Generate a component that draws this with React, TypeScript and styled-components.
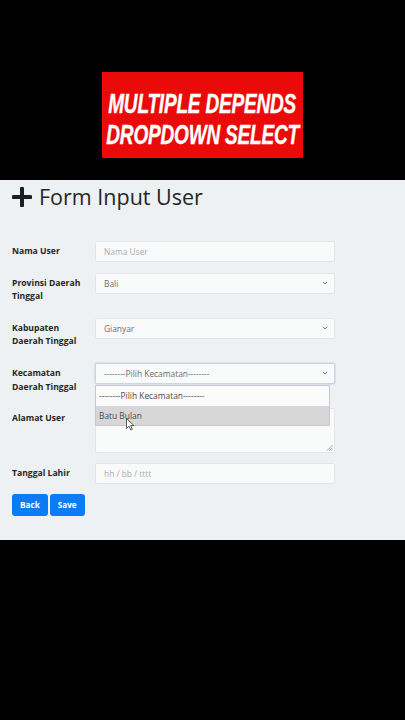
import styled, { createGlobalStyle } from 'styled-components'

const GlobalStyle = createGlobalStyle`
  html, body {
    margin: 0;
    padding: 0;
    background: #000;
  }
  * {
    box-sizing: border-box;
  }
`

const Page = styled.div`
  width: 405px;
  height: 720px;
  display: flex;
  flex-direction: column;
  background: #000;
  font-family: 'Open Sans', 'Noto Sans', sans-serif;
`

const Top = styled.div`
  height: 180px;
  display: flex;
  justify-content: center;
  padding-top: 72px;
`

const Banner = styled.div`
  width: 201px;
  height: 86px;
  background: #ea0a0a;
  display: flex;
  flex-direction: column;
  align-items: center;
  justify-content: center;
  padding-top: 8px;
`

const BannerLine = styled.span`
  display: block;
  color: #fff;
  font-family: 'Liberation Sans', Arial, sans-serif;
  font-weight: 700;
  font-style: italic;
  font-size: 28px;
  line-height: 31px;
  white-space: nowrap;
  transform: scaleX(0.68);
  letter-spacing: -0.3px;
  -webkit-text-stroke: 0.4px #fff;
`

const Panel = styled.div`
  height: 360px;
  background: #eef1f3;
  padding: 6px 12px 0 12px;
  position: relative;
`

const Title = styled.h1`
  margin: 0;
  display: flex;
  align-items: center;
  gap: 7px;
  font-weight: 400;
  font-size: 21.5px;
  line-height: 22px;
  color: #262626;
  height: 22px;
`

const Form = styled.div`
  margin-top: 33px;
  display: flex;
  flex-direction: column;
  gap: 10px;
`

const Row = styled.div`
  display: flex;
  align-items: flex-start;
  position: relative;
`

const Label = styled.div`
  width: 83px;
  flex: none;
  padding: 4px 0 4px 0;
  font-size: 8.6px;
  line-height: 13.6px;
  font-weight: 700;
  color: #262626;
`

const Field = styled.div<{ $focus?: boolean }>`
  width: 240px;
  height: 21px;
  flex: none;
  display: flex;
  align-items: center;
  justify-content: space-between;
  padding: 0 6px 0 8px;
  background: #f9fafa;
  border: 1px solid ${(p) => (p.$focus ? '#c9d6e6' : '#e2e6e9')};
  border-radius: 2px;
  box-shadow: ${(p) => (p.$focus ? '0 0 0 1px rgba(150,180,220,0.25)' : 'none')};
`

const FieldText = styled.span<{ $muted?: boolean }>`
  font-size: 8.4px;
  color: ${(p) => (p.$muted ? '#a9adb1' : '#6b6f73')};
  white-space: nowrap;
`

const TextArea = styled.div`
  width: 240px;
  height: 45px;
  flex: none;
  background: #f9fafa;
  border: 1px solid #e2e6e9;
  border-radius: 2px;
  position: relative;
`

const Grip = styled.svg`
  position: absolute;
  right: 1px;
  bottom: 1px;
`

const Dropdown = styled.div`
  position: absolute;
  left: 83px;
  top: 22px;
  width: 235px;
  background: #fbfbfb;
  border: 1px solid #c9c9cb;
  z-index: 2;
  display: flex;
  flex-direction: column;
`

const Option = styled.div<{ $active?: boolean }>`
  height: ${(p) => (p.$active ? '19px' : '20px')};
  display: flex;
  align-items: center;
  padding-left: 3px;
  font-size: 8.4px;
  color: #4a4a4a;
  background: ${(p) => (p.$active ? '#d7d7d9' : 'transparent')};
  white-space: nowrap;
`

const Cursor = styled.svg`
  position: absolute;
  left: 114px;
  top: 55px;
  z-index: 3;
`

const Buttons = styled.div`
  margin-top: 9px;
  display: flex;
  gap: 2px;
`

const Button = styled.button`
  height: 22px;
  padding: 0 8px;
  border: none;
  border-radius: 3px;
  background: #0b7cf6;
  color: #fff;
  font-family: 'Open Sans', 'Noto Sans', sans-serif;
  font-weight: 700;
  font-size: 8.2px;
  line-height: 22px;
`

const Bottom = styled.div`
  flex: 1;
  background: #000;
`

const Chevron = () => (
  <svg width="6" height="4" viewBox="0 0 6 4">
    <path d="M0.8 0.8 L3 3 L5.2 0.8" fill="none" stroke="#777" strokeWidth="1" />
  </svg>
)

const Plus = () => (
  <svg width="20" height="20" viewBox="0 0 20 20">
    <path d="M10 1.5 V18.5 M1.5 10 H18.5" stroke="#1e1e1e" strokeWidth="4" strokeLinecap="round" />
  </svg>
)

export default function App() {
  return (
    <Page>
      <GlobalStyle />
      <Top>
        <Banner>
          <BannerLine>MULTIPLE DEPENDS</BannerLine>
          <BannerLine>DROPDOWN SELECT</BannerLine>
        </Banner>
      </Top>
      <Panel>
        <Title>
          <Plus />
          Form Input User
        </Title>
        <Form>
          <Row>
            <Label>Nama User</Label>
            <Field>
              <FieldText $muted>Nama User</FieldText>
            </Field>
          </Row>
          <Row>
            <Label>
              Provinsi Daerah
              <br />
              Tinggal
            </Label>
            <Field>
              <FieldText>Bali</FieldText>
              <Chevron />
            </Field>
          </Row>
          <Row>
            <Label>
              Kabupaten
              <br />
              Daerah Tinggal
            </Label>
            <Field>
              <FieldText>Gianyar</FieldText>
              <Chevron />
            </Field>
          </Row>
          <Row>
            <Label>
              Kecamatan
              <br />
              Daerah Tinggal
            </Label>
            <Field $focus>
              <FieldText>--------Pilih Kecamatan--------</FieldText>
              <Chevron />
            </Field>
            <Dropdown>
              <Option>--------Pilih Kecamatan--------</Option>
              <Option $active>Batu Bulan</Option>
            </Dropdown>
            <Cursor width="9" height="13" viewBox="0 0 9 13">
              <path d="M0.5 0.5 L0.5 10.5 L3 8.2 L4.8 12 L6.3 11.3 L4.6 7.6 L8 7.6 Z" fill="#fff" stroke="#333" strokeWidth="0.8" />
            </Cursor>
          </Row>
          <Row>
            <Label>Alamat User</Label>
            <TextArea>
              <Grip width="7" height="7" viewBox="0 0 7 7">
                <path d="M6.5 1 L1 6.5 M6.5 3.5 L3.5 6.5 M6.5 5.5 L5.5 6.5" stroke="#999" strokeWidth="0.8" />
              </Grip>
            </TextArea>
          </Row>
          <Row>
            <Label>Tanggal Lahir</Label>
            <Field>
              <FieldText $muted>hh / bb / tttt</FieldText>
            </Field>
          </Row>
        </Form>
        <Buttons>
          <Button>Back</Button>
          <Button>Save</Button>
        </Buttons>
      </Panel>
      <Bottom />
    </Page>
  )
}
